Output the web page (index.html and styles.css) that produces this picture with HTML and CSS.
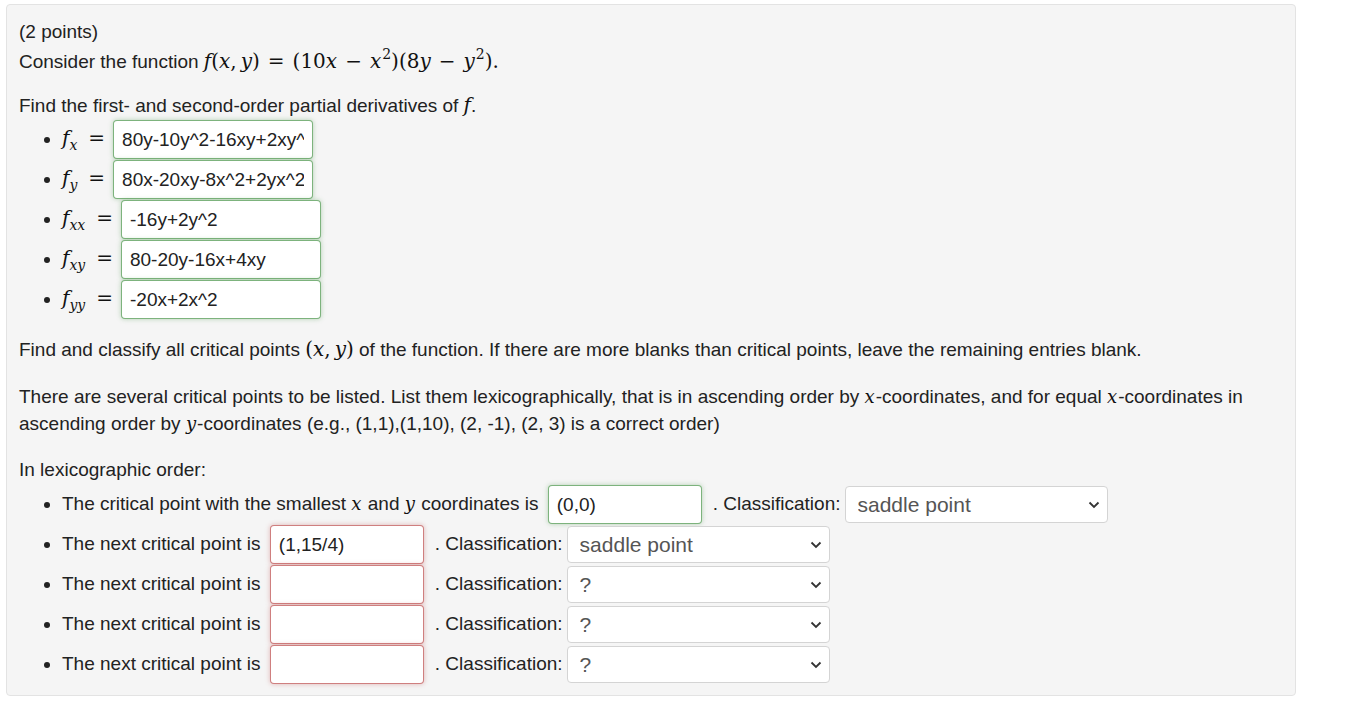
FILE: index.html
```html
<!DOCTYPE html>
<html>
<head>
<meta charset="utf-8">
<link rel="stylesheet" href="styles.css">
</head>
<body>
<div class="panel">
  <p class="first">(2 points)<br>Consider the function <span class="m"><i>f</i>(<i>x</i>,&thinsp;<i>y</i>)<span class="op">=</span>(10<i>x</i><span class="op">−</span><i>x</i><sup>2</sup>)(8<i>y</i><span class="op">−</span><i>y</i><sup>2</sup>).</span></p>
  <p class="tight">Find the first- and second-order partial derivatives of <span class="m"><i>f</i></span>.</p>
  <ul class="deriv">
    <li><span class="m"><i>f</i><sub><i>x</i></sub><span class="op">=</span></span><input class="ans ok" type="text" value="80y-10y^2-16xy+2xy^2"></li>
    <li><span class="m"><i>f</i><sub><i>y</i></sub><span class="op">=</span></span><input class="ans ok" type="text" value="80x-20xy-8x^2+2yx^2"></li>
    <li><span class="m"><i>f</i><sub><i>xx</i></sub><span class="op">=</span></span><input class="ans ok" type="text" value="-16y+2y^2"></li>
    <li><span class="m"><i>f</i><sub><i>xy</i></sub><span class="op">=</span></span><input class="ans ok" type="text" value="80-20y-16x+4xy"></li>
    <li><span class="m"><i>f</i><sub><i>yy</i></sub><span class="op">=</span></span><input class="ans ok" type="text" value="-20x+2x^2"></li>
  </ul>
  <p class="gap">Find and classify all critical points <span class="m">(<i>x</i>,&thinsp;<i>y</i>)</span> of the function. If there are more blanks than critical points, leave the remaining entries blank.</p>
  <p>There are several critical points to be listed. List them lexicographically, that is in ascending order by <span class="m sm"><i>x</i></span>-coordinates, and for equal <span class="m sm"><i>x</i></span>-coordinates in ascending order by <span class="m sm"><i>y</i></span>-coordinates (e.g., (1,1),(1,10), (2, -1), (2, 3) is a correct order)</p>
  <p class="lex">In lexicographic order:</p>
  <ul class="crit">
    <li>The critical point with the smallest <span class="m sm"><i>x</i></span> and <span class="m sm"><i>y</i></span> coordinates is <input class="pt ok" type="text" value="(0,0)"><span class="cl">. Classification:</span><span class="selwrap"><select class="sel"><option>saddle point</option></select><svg class="chev" width="12" height="8" viewBox="0 0 12 8"><path d="M1.5 1.5 L6 6 L10.5 1.5" fill="none" stroke="#333" stroke-width="1.8"/></svg></span></li>
    <li>The next critical point is <input class="pt bad" type="text" value="(1,15/4)"><span class="cl">. Classification:</span><span class="selwrap"><select class="sel"><option>saddle point</option></select><svg class="chev" width="12" height="8" viewBox="0 0 12 8"><path d="M1.5 1.5 L6 6 L10.5 1.5" fill="none" stroke="#333" stroke-width="1.8"/></svg></span></li>
    <li>The next critical point is <input class="pt bad" type="text" value=""><span class="cl">. Classification:</span><span class="selwrap"><select class="sel"><option>?</option></select><svg class="chev" width="12" height="8" viewBox="0 0 12 8"><path d="M1.5 1.5 L6 6 L10.5 1.5" fill="none" stroke="#333" stroke-width="1.8"/></svg></span></li>
    <li>The next critical point is <input class="pt bad" type="text" value=""><span class="cl">. Classification:</span><span class="selwrap"><select class="sel"><option>?</option></select><svg class="chev" width="12" height="8" viewBox="0 0 12 8"><path d="M1.5 1.5 L6 6 L10.5 1.5" fill="none" stroke="#333" stroke-width="1.8"/></svg></span></li>
    <li>The next critical point is <input class="pt bad" type="text" value=""><span class="cl">. Classification:</span><span class="selwrap"><select class="sel"><option>?</option></select><svg class="chev" width="12" height="8" viewBox="0 0 12 8"><path d="M1.5 1.5 L6 6 L10.5 1.5" fill="none" stroke="#333" stroke-width="1.8"/></svg></span></li>
  </ul>
</div>
</body>
</html>
```
FILE: styles.css
```css
html, body {
  margin: 0;
  padding: 0;
  background: #fff;
}
body {
  font-family: "Liberation Sans", Arial, sans-serif;
  font-size: 19px;
  line-height: 27px;
  color: #222;
}
.panel {
  margin: 4px 0 0 6px;
  width: 1264px;
  padding: 12px 12px 11px 12px;
  background: #f5f5f5;
  border: 1px solid #e3e3e3;
  border-radius: 4px;
}
p {
  margin: 0 0 19px 0;
}
p.tight {
  margin-bottom: 0;
}
p.gap {
  margin-bottom: 20px;
}
p.lex {
  margin-bottom: 1px;
}
.first {
  line-height: 30px;
  margin-bottom: 15px;
}
.m {
  font-family: "DejaVu Serif", "Liberation Serif", serif;
  font-size: 20px;
  line-height: 1;
  color: #111;
  white-space: nowrap;
}
.m.sm {
  font-size: 18px;
  display: inline-block;
  line-height: 20px;
  margin-right: 1px;
}
.m i {
  font-style: italic;
}
.m sup {
  font-size: 14px;
  vertical-align: 9px;
  line-height: 0;
  margin-left: 1px;
}
.m sub {
  font-size: 14px;
  vertical-align: -5px;
  line-height: 0;
}
.op {
  margin: 0 8px;
  font-style: normal;
}
ul {
  margin: 0 0 17px 0;
  padding-left: 43px;
}
.deriv li {
  height: 40px;
  line-height: 40px;
}
.deriv .op {
  margin: 0 8px 0 11px;
}
input {
  font-family: "Liberation Sans", Arial, sans-serif;
  font-size: 19px;
  color: #222;
  background: #fff;
  box-sizing: border-box;
  height: 39px;
  border-radius: 4px;
  padding: 0 8px;
  vertical-align: middle;
  outline: none;
}
.ans {
  width: 200px;
}
.ok {
  border: 1px solid rgba(81, 153, 81, 0.75);
  box-shadow: 0 0 5px rgba(81, 153, 81, 0.4);
}
.bad {
  border: 1px solid rgba(191, 84, 84, 0.75);
  box-shadow: 0 0 5px rgba(191, 84, 84, 0.4);
}
.crit {
  margin-bottom: 0;
}
.crit li {
  height: 40px;
  line-height: 40px;
}
.pt {
  width: 154px;
  margin-left: 4px;
}
.cl {
  margin-left: 11px;
  margin-right: 4px;
}
.selwrap {
  position: relative;
  display: inline-block;
  vertical-align: middle;
  width: 263px;
  height: 37px;
}
.sel {
  appearance: none;
  -webkit-appearance: none;
  width: 100%;
  height: 37px;
  box-sizing: border-box;
  border: 1px solid #d4d4d4;
  border-radius: 4px;
  background: #fff;
  font-family: "Liberation Sans", Arial, sans-serif;
  font-size: 21px;
  color: #555;
  padding: 0 30px 0 12px;
  outline: none;
  display: block;
}
.chev {
  position: absolute;
  right: 8px;
  top: 15px;
}
```
